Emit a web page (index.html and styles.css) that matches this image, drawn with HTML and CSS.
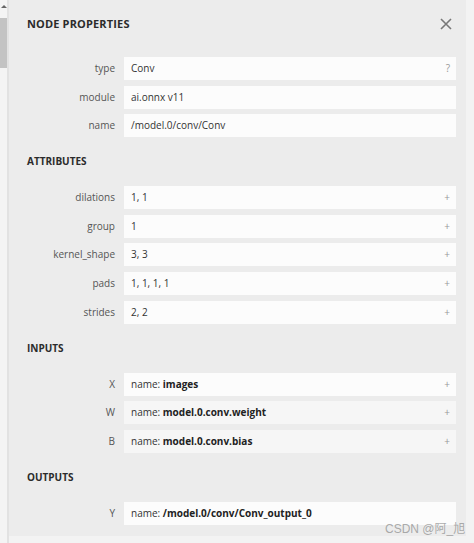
FILE: index.html
```html
<!DOCTYPE html>
<html>
<head>
<meta charset="utf-8">
<link rel="stylesheet" href="styles.css">
</head>
<body>
<div class="page">
  <div class="scrollbar">
    <div class="scroll-arrow"></div>
    <div class="scroll-thumb"></div>
  </div>
  <div class="panel">
    <div class="title-bar">
      <span class="title">NODE PROPERTIES</span>
      <svg class="close" width="12" height="12" viewBox="0 0 12 12"><path d="M1 1L11 11M11 1L1 11" stroke="#777" stroke-width="1.6" fill="none"/></svg>
    </div>
    <div class="row"><div class="label">type</div><div class="value">Conv<span class="icon">?</span></div></div>
    <div class="row"><div class="label">module</div><div class="value">ai.onnx v11</div></div>
    <div class="row"><div class="label">name</div><div class="value">/model.0/conv/Conv</div></div>

    <div class="section">ATTRIBUTES</div>
    <div class="row"><div class="label">dilations</div><div class="value">1, 1<span class="icon">+</span></div></div>
    <div class="row"><div class="label">group</div><div class="value">1<span class="icon">+</span></div></div>
    <div class="row"><div class="label">kernel_shape</div><div class="value">3, 3<span class="icon">+</span></div></div>
    <div class="row"><div class="label">pads</div><div class="value">1, 1, 1, 1<span class="icon">+</span></div></div>
    <div class="row"><div class="label">strides</div><div class="value">2, 2<span class="icon">+</span></div></div>

    <div class="section">INPUTS</div>
    <div class="row"><div class="label">X</div><div class="value">name:&nbsp;<b>images</b><span class="icon">+</span></div></div>
    <div class="row"><div class="label">W</div><div class="value dim">name:&nbsp;<b>model.0.conv.weight</b><span class="icon">+</span></div></div>
    <div class="row"><div class="label">B</div><div class="value dim">name:&nbsp;<b>model.0.conv.bias</b><span class="icon">+</span></div></div>

    <div class="section">OUTPUTS</div>
    <div class="row"><div class="label">Y</div><div class="value">name:&nbsp;<b>/model.0/conv/Conv_output_0</b></div></div>
    <div class="watermark">CSDN @阿_旭</div>
  </div>
</div>
</body>
</html>
```

FILE: styles.css
```css
html, body {
  margin: 0;
  padding: 0;
  background: #f3f3f3;
  width: 474px;
  height: 543px;
  overflow: hidden;
}
.page {
  display: flex;
  height: 543px;
  font-family: "Open Sans", "Noto Sans", "Noto Sans CJK SC", sans-serif;
}
.scrollbar {
  width: 7px;
  background: #f4f4f4;
  border-right: 2px solid #e2e2e2;
  display: flex;
  flex-direction: column;
  align-items: flex-start;
}
.scroll-arrow {
  width: 0;
  height: 0;
  margin: 5px 0 0 1px;
  border-left: 3px solid transparent;
  border-right: 3px solid transparent;
  border-bottom: 3px solid #666;
}
.scroll-thumb {
  width: 7px;
  height: 50px;
  margin-top: 10px;
  background: #c3c3c3;
}
.panel {
  position: relative;
  width: 457px;
  height: 536px;
  background: #ececec;
  padding: 0 10px 0 18px;
  box-sizing: border-box;
}
.title-bar {
  height: 57px;
  display: flex;
  justify-content: space-between;
  align-items: flex-start;
  padding-top: 16px;
  box-sizing: border-box;
}
.title {
  font-size: 11px;
  font-weight: 700;
  color: #2b2b2b;
  line-height: 16px;
  letter-spacing: 0.15px;
}
.close {
  margin-top: 2px;
  margin-right: 4px;
}
.row {
  display: flex;
  height: 23px;
  margin-bottom: 5.7px;
  align-items: stretch;
}
.label {
  width: 88px;
  text-align: right;
  font-size: 10px;
  line-height: 23px;
  color: #555;
  margin-right: 9px;
  flex: none;
}
.value {
  flex: 1;
  position: relative;
  background: #fcfcfc;
  font-size: 10px;
  line-height: 23px;
  color: #333;
  padding-left: 7px;
  white-space: nowrap;
}
.value.dim {
  background: #f6f6f6;
}
.value b {
  font-weight: 700;
  color: #222;
}
.icon {
  position: absolute;
  right: 6px;
  top: 0;
  font-size: 10px;
  color: #999;
  line-height: 22px;
}
.section {
  font-size: 10px;
  font-weight: 700;
  color: #2b2b2b;
  line-height: 14px;
  padding-top: 11px;
  height: 32px;
}
.watermark {
  position: absolute;
  left: 376px;
  top: 519px;
  font-family: "Liberation Sans", "Noto Sans CJK SC", sans-serif;
  font-size: 12px;
  color: rgba(150, 150, 150, 0.8);
  white-space: nowrap;
}
```
